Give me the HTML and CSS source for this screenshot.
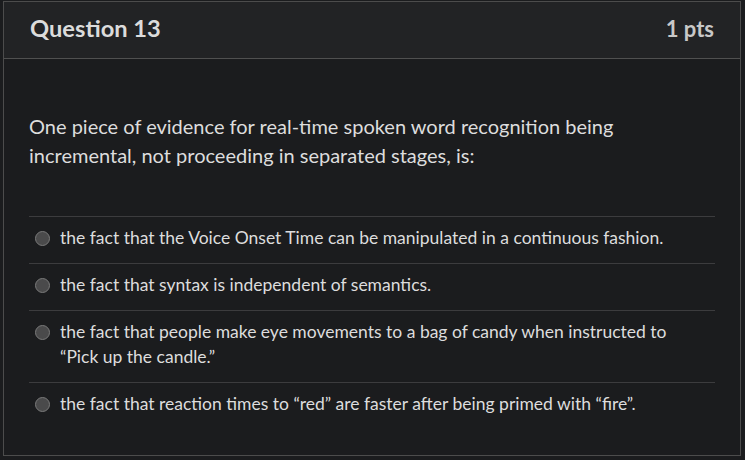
FILE: index.html
```html
<!DOCTYPE html>
<html>
<head>
<meta charset="utf-8">
<link rel="stylesheet" href="styles.css">
</head>
<body>
<div class="question">
  <div class="q-header">
    <span class="q-title">Question 13</span>
    <span class="q-points">1 pts</span>
  </div>
  <div class="q-body">
    <p class="q-text">One piece of evidence for real-time spoken word recognition being incremental, not proceeding in separated stages, is:</p>
    <div class="answers">
      <label class="answer"><span class="radio"></span><span class="answer-text">the fact that the Voice Onset Time can be manipulated in a continuous fashion.</span></label>
      <label class="answer"><span class="radio"></span><span class="answer-text">the fact that syntax is independent of semantics.</span></label>
      <label class="answer"><span class="radio"></span><span class="answer-text">the fact that people make eye movements to a bag of candy when instructed to “Pick up the candle.”</span></label>
      <label class="answer"><span class="radio"></span><span class="answer-text">the fact that reaction times to “red” are faster after being primed with “fire”.</span></label>
    </div>
  </div>
</div>
</body>
</html>
```
FILE: styles.css
```css
html, body {
  margin: 0;
  padding: 0;
  background: #1b1c1e;
}
body {
  font-family: Lato, "Open Sans", sans-serif;
  color: #dddddd;
  padding: 1px 0 0 3px;
}
.question {
  width: 736px;
  height: 453px;
  border: 1px solid #4c4c4c;
  background: #1b1c1e;
}
.q-header {
  background: #222325;
  border-bottom: 1px solid #505050;
  display: flex;
  align-items: center;
  justify-content: space-between;
  padding: 0 26px 4px 26px;
  box-sizing: border-box;
  height: 57px;
}
.q-title {
  font-weight: 700;
  font-size: 23.7px;
  color: #dcdcdc;
}
.q-points {
  font-weight: 700;
  font-size: 22px;
  color: #c8c8c8;
}
.q-body {
  padding: 0 25px;
}
.q-text {
  margin: 0;
  padding: 53px 70px 0 0;
  font-size: 20px;
  line-height: 29px;
  height: 157px;
  box-sizing: border-box;
}
.answer {
  display: flex;
  align-items: flex-start;
  border-top: 1px solid #3c3c3e;
  padding: 8px 40px 13px 6px;
  font-size: 17.5px;
  line-height: 25px;
}
.radio {
  flex: none;
  width: 13px;
  height: 13px;
  border-radius: 50%;
  border: 1px solid #7a7a7a;
  background: #4a4a4b;
  margin: 6px 10px 0 0;
}
.answer-text {
  color: #dddddd;
}
```
